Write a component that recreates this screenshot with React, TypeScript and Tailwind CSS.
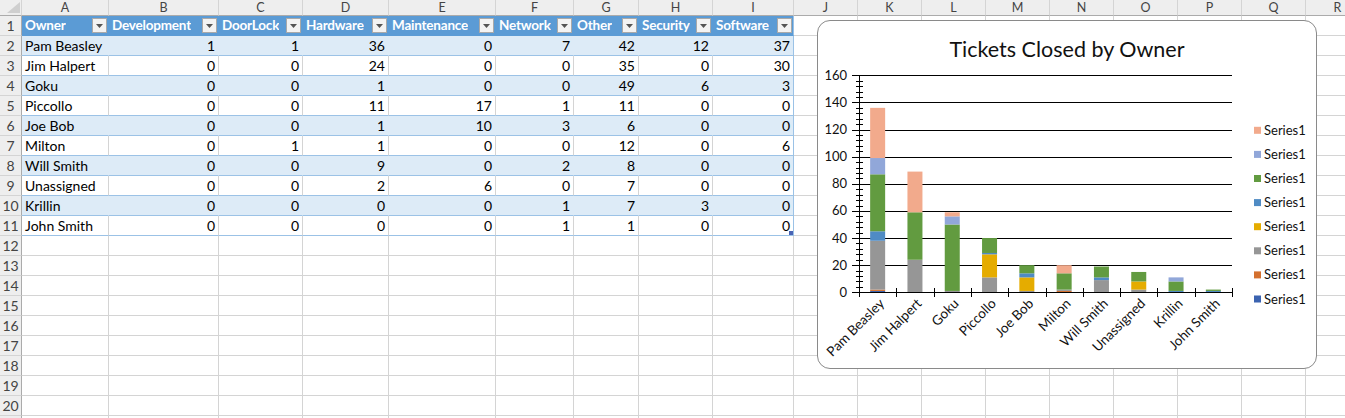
import React from 'react';
import clsx from 'clsx';

type OwnerRow = { owner: string; v: number[] };

const HEADERS = ['Owner', 'Development', 'DoorLock', 'Hardware', 'Maintenance', 'Network', 'Other', 'Security', 'Software'];

const ROWS: OwnerRow[] = [
  { owner: 'Pam Beasley', v: [1, 1, 36, 0, 7, 42, 12, 37] },
  { owner: 'Jim Halpert', v: [0, 0, 24, 0, 0, 35, 0, 30] },
  { owner: 'Goku', v: [0, 0, 1, 0, 0, 49, 6, 3] },
  { owner: 'Piccollo', v: [0, 0, 11, 17, 1, 11, 0, 0] },
  { owner: 'Joe Bob', v: [0, 0, 1, 10, 3, 6, 0, 0] },
  { owner: 'Milton', v: [0, 1, 1, 0, 0, 12, 0, 6] },
  { owner: 'Will Smith', v: [0, 0, 9, 0, 2, 8, 0, 0] },
  { owner: 'Unassigned', v: [0, 0, 2, 6, 0, 7, 0, 0] },
  { owner: 'Krillin', v: [0, 0, 0, 0, 1, 7, 3, 0] },
  { owner: 'John Smith', v: [0, 0, 0, 0, 1, 1, 0, 0] },
];

const COLS = ['A', 'B', 'C', 'D', 'E', 'F', 'G', 'H', 'I', 'J', 'K', 'L', 'M', 'N', 'O', 'P', 'Q', 'R'];

// bottom of the stack first (Development ... Software)
const SERIES_COLORS = ['#3b63b0', '#d4702e', '#969696', '#e5ac00', '#4f8bc4', '#629b40', '#91a7d9', '#f2aa8c'];

// chart geometry, in page pixels
const AX_X = 859;
const AX_END = 1232;
const ZERO_Y = 292.3;
const PX_PER = (292.3 - 75.3) / 160;
const CAT_W = (AX_END - AX_X) / 10;
const BAR_W = 15;
const yOf = (v: number) => ZERO_Y - v * PX_PER;
const crisp = (y: number) => Math.round(y) + 0.5;

const FilterButton: React.FC = () => (
  <span className="ml-auto flex h-[15px] w-[15px] shrink-0 items-center justify-center border border-[#a9a9a9] bg-[#f3f3f3]">
    <svg width="7" height="4" viewBox="0 0 7 4">
      <path d="M0 0h7L3.5 4z" fill="#555" />
    </svg>
  </span>
);

const Cell: React.FC<{ r: number; c: number }> = ({ r, c }) => {
  if (r === 1 && c < 9) {
    return (
      <div
        className={clsx(
          'flex items-center whitespace-nowrap bg-[#5b9bd5] pl-[3px] pr-[1px] text-[13.5px] font-bold tracking-[-0.2px] text-white border-b border-b-[#5b9bd5] border-r',
          c === 8 ? 'border-r-[#9bc2e6]' : 'border-r-[#5b9bd5]'
        )}
      >
        <span className="overflow-hidden">{HEADERS[c]}</span>
        <FilterButton />
      </div>
    );
  }
  if (r >= 2 && r <= 11 && c < 9) {
    const band = r % 2 === 0;
    const row = ROWS[r - 2];
    return (
      <div
        className={clsx(
          'relative flex items-center whitespace-nowrap px-[3px] border-r border-b border-b-[#9bc2e6]',
          band ? 'bg-[#ddebf7]' : 'bg-white',
          c === 8 ? 'border-r-[#9bc2e6]' : band ? 'border-r-[#ddebf7]' : 'border-r-[#d4d4d4]',
          c === 0 ? 'justify-start' : 'justify-end'
        )}
      >
        {c === 0 ? row.owner : row.v[c - 1]}
        {r === 11 && c === 8 && <span className="absolute bottom-0 right-0 h-[4px] w-[4px] bg-[#4a64b5]" />}
      </div>
    );
  }
  return <div className="border-r border-b border-[#d4d4d4] bg-white" />;
};

const Chart: React.FC = () => {
  const names = ROWS.map((r) => r.owner);
  const gridVals = [20, 40, 60, 80, 100, 120, 140, 160];
  const minor: number[] = [];
  for (let v = 4; v <= 160; v += 4) if (v % 20 !== 0) minor.push(v);

  return (
    <div className="absolute left-[817px] top-[20px] h-[349px] w-[500px] rounded-[13px] border border-[#8a8a8a] bg-white">
      <svg className="absolute inset-0" width="498" height="347" viewBox="818 21 498 347">
        <text x={1067} y={57} textAnchor="middle" fontSize={21.5} fill="#111">
          Tickets Closed by Owner
        </text>

        {gridVals.map((v) => (
          <line key={v} x1={852} x2={AX_END} y1={crisp(yOf(v))} y2={crisp(yOf(v))} stroke="#000" strokeWidth={1} />
        ))}

        {ROWS.map((row, i) => {
          let acc = 0;
          const x = AX_X + CAT_W * i + (CAT_W - BAR_W) / 2;
          return row.v.map((val, s) => {
            const y0 = yOf(acc);
            acc += val;
            const y1 = yOf(acc);
            if (val === 0) return null;
            return <rect key={i + '-' + s} x={x} y={y1} width={BAR_W} height={y0 - y1} fill={SERIES_COLORS[s]} />;
          });
        })}

        <line x1={AX_X + 0.5} x2={AX_X + 0.5} y1={crisp(yOf(160))} y2={crisp(ZERO_Y)} stroke="#000" strokeWidth={1} />
        {minor.map((v) => (
          <line key={v} x1={856} x2={863} y1={crisp(yOf(v))} y2={crisp(yOf(v))} stroke="#000" strokeWidth={1} />
        ))}
        <line x1={852} x2={AX_END} y1={crisp(ZERO_Y)} y2={crisp(ZERO_Y)} stroke="#000" strokeWidth={1} />
        {Array.from({ length: 11 }, (_, k) => {
          const x = Math.round(AX_X + CAT_W * k) + 0.5;
          return <line key={k} x1={x} x2={x} y1={288} y2={297} stroke="#000" strokeWidth={1} />;
        })}

        {[0, ...gridVals].map((v) => (
          <text key={v} x={847} y={yOf(v) + 4.5} textAnchor="end" fontSize={13} fill="#111">
            {v}
          </text>
        ))}

        {names.map((n, i) => {
          const cx = AX_X + CAT_W * i + CAT_W / 2;
          return (
            <text
              key={n}
              transform={`translate(${cx + 5} ${302}) rotate(-45)`}
              textAnchor="end"
              dominantBaseline="middle"
              fontSize={13.5}
              fill="#111"
            >
              {n}
            </text>
          );
        })}

        {SERIES_COLORS.slice()
          .reverse()
          .map((col, i) => {
            const cy = 130.3 + i * 24.1;
            return (
              <g key={col}>
                <rect x={1254} y={cy - 3.5} width={7} height={7} fill={col} />
                <text x={1264} y={cy + 4.5} fontSize={13} fill="#111">
                  Series1
                </text>
              </g>
            );
          })}
      </svg>
    </div>
  );
};

const App: React.FC = () => {
  const cells: React.ReactNode[] = [];

  cells.push(
    <div key="corner" className="relative border-r border-b border-r-[#d4d4d4] border-b-[#ababab] bg-[#eeeeee]">
      <svg className="absolute right-[1px] bottom-[2px]" width="13" height="11" viewBox="0 0 13 11">
        <path d="M13 0V11H0z" fill="#cfcfcf" />
      </svg>
    </div>
  );
  COLS.forEach((c) =>
    cells.push(
      <div
        key={'h' + c}
        className="flex items-center justify-center border-r border-b border-r-[#d4d4d4] border-b-[#ababab] bg-[#eeeeee] text-[12.5px] leading-[15px] text-[#444]"
      >
        {c}
      </div>
    )
  );
  for (let r = 1; r <= 21; r++) {
    cells.push(
      <div
        key={'r' + r}
        className="flex items-center justify-center border-r border-b border-r-[#ababab] border-b-[#d4d4d4] bg-[#eeeeee] text-[14px] text-[#444]"
      >
        {r <= 20 ? r : ''}
      </div>
    );
    for (let c = 0; c < COLS.length; c++) {
      cells.push(<Cell key={r + '-' + c} r={r} c={c} />);
    }
  }

  return (
    <div className="relative h-[418px] w-[1345px] overflow-hidden bg-white font-['Lato',sans-serif] text-[14px] text-black">
      <div className="grid grid-cols-[22px_87px_110px_84px_86px_107px_78px_65px_74px_81px_64px_64px_64px_64px_64px_64px_64px_64px_64px] grid-rows-[16px_repeat(21,20px)] w-[1370px]">
        {cells}
      </div>
      <Chart />
    </div>
  );
};

export default App;
